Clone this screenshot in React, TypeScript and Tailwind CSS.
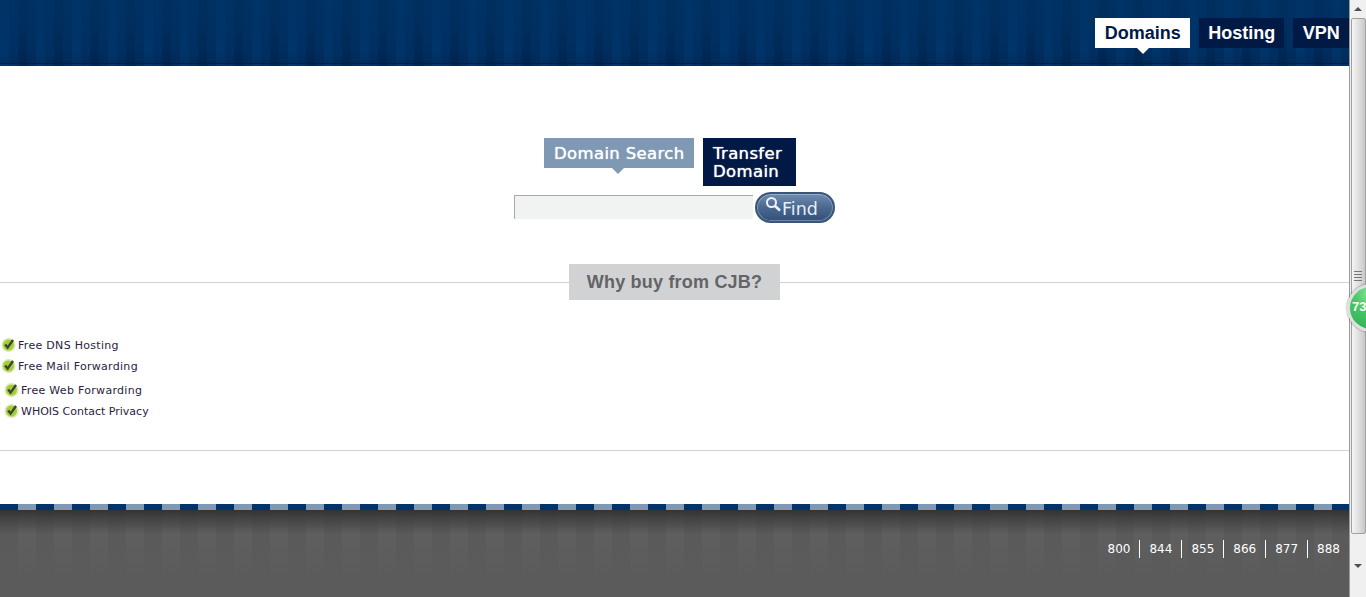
const dv = "font-['DejaVu_Sans',sans-serif]";
const lib = "font-['Liberation_Sans',Arial,sans-serif]";

function Check() {
  return (
    <svg width="15" height="15" viewBox="0 0 15 15" className="shrink-0 -mt-[2px]">
      <circle cx="7.5" cy="8" r="7" fill="#dcebb0" />
      <circle cx="7.5" cy="8" r="5.5" fill="#a5cc3c" />
      <path d="M4.2 7.6 L6.6 10.6 L12 3" fill="none" stroke="#3a4630" strokeWidth="2.4" />
    </svg>
  );
}

function Feature({ label, wide, tight, cls }: { label: string; wide?: boolean; tight?: boolean; cls: string }) {
  return (
    <div className={`flex items-center h-[16px] ${wide ? "pl-[3.5px] gap-[2.5px]" : "pl-[1px] gap-[2px]"} ${cls}`}>
      <Check />
      <span className={`${dv} text-[11px] leading-[16px] text-[#2b2340] whitespace-nowrap mt-[1px] ${tight ? "" : "tracking-[0.3px]"}`}>{label}</span>
    </div>
  );
}

function NavItem({ label, active }: { label: string; active?: boolean }) {
  return (
    <div className="relative">
      <div className={`${lib} h-[30px] px-[9.25px] flex items-center font-bold text-[18px] ${active ? "bg-white text-[#001a45]" : "bg-[#001a45] text-white"}`}>
        {label}
      </div>
      {active && (
        <div className="absolute left-1/2 -ml-[6px] top-[30px] w-0 h-0 border-l-[6px] border-r-[6px] border-t-[6px] border-l-transparent border-r-transparent border-t-white" />
      )}
    </div>
  );
}

export default function App() {
  const numbers = ["800", "844", "855", "866", "877", "888"];
  return (
    <div className="flex h-[597px] w-full overflow-hidden bg-white relative">
      <div className="flex-1 min-w-0 flex flex-col">
        <header className="h-[66px] shrink-0 flex flex-col bg-[repeating-linear-gradient(90deg,#00366c_0,#00366c_9px,#003064_9px,#003064_18px,#002854_18px,#002854_27px,#002e5f_27px,#002e5f_36px)]">
          <div className="flex-1 min-h-0 flex justify-end items-start pt-[18px] gap-[9px] bg-[linear-gradient(180deg,rgba(0,50,100,0.7)_0,rgba(0,50,100,0.5)_45%,rgba(0,40,85,0.1)_85%,rgba(0,30,70,0.3)_100%)]">
            <NavItem label="Domains" active />
            <NavItem label="Hosting" />
            <NavItem label="VPN" />
          </div>
          <div className="h-px shrink-0 bg-[#00204a]" />
          <div className="h-[2px] shrink-0" />
        </header>

        <main className="flex-1 flex flex-col">
          <div className="flex justify-center items-start gap-[9px] pt-[72px] mr-[9px]">
            <div className={`relative ${dv} bg-[#7f99b5] text-white text-[16.5px] tracking-[0.35px] [text-shadow:0_0_1px_#ffffff] whitespace-nowrap h-[30px] w-[150px] pl-[10px] pt-[1px] leading-[30px]`}>
              Domain Search
              <div className="absolute left-[68px] top-[30px] w-0 h-0 border-l-[6px] border-r-[6px] border-t-[6px] border-l-transparent border-r-transparent border-t-[#7f99b5]" />
            </div>
            <div className={`${dv} bg-[#001a45] text-white text-[16.5px] tracking-[0.35px] [text-shadow:0_0_1px_#ffffff] leading-[18px] w-[93px] h-[48px] pl-[10px] pt-[7px]`}>
              Transfer
              <br />
              Domain
            </div>
          </div>

          <div className="flex justify-center items-start gap-[2px] mt-[6px]">
            <div className="w-[239px] h-[24px] mt-[3px] bg-[#f1f3f3] border-t border-l border-[#a8a8a8]" />
            <div className="h-[31px] w-[80px] rounded-full border-2 border-[#3a5678] bg-[linear-gradient(180deg,#6f8cb0_0,#4a688f_50%,#32507a_100%)] flex items-center pl-[8px] shadow-[inset_0_0_0_1px_rgba(255,255,255,0.3)]">
              <svg width="17" height="17" viewBox="0 0 17 17" className="-mt-[6px] shrink-0">
                <circle cx="6.5" cy="6.5" r="4.5" fill="none" stroke="#eef3fa" strokeWidth="2" />
                <path d="M10 10 L15 14.5" stroke="#eef3fa" strokeWidth="2.6" />
              </svg>
              <span className={`${dv} text-[17.5px] leading-[18px] text-[#e8eef6] mt-[2px]`}>Find</span>
            </div>
          </div>

          <div className="flex items-center mt-[41px]">
            <div className="flex-1 h-px bg-[#d2d2d4]" />
            <div className={`${lib} w-[211px] h-[36px] bg-[#d1d2d4] text-[#636466] font-bold text-[18px] tracking-[0.2px] flex items-center justify-center`}>
              Why buy from CJB?
            </div>
            <div className="flex-1 h-px bg-[#d2d2d4]" />
          </div>

          <div className="pt-[37px]">
            <Feature label="Free DNS Hosting" cls="" />
            <Feature label="Free Mail Forwarding" cls="mt-[5px]" />
            <Feature label="Free Web Forwarding" wide cls="mt-[8px]" />
            <Feature label="WHOIS Contact Privacy" wide tight cls="mt-[5px]" />
          </div>

          <div className="h-px bg-[#d2d2d4] mt-[31px]" />
        </main>

        <footer className="shrink-0">
          <div className="h-[6px] bg-[repeating-linear-gradient(90deg,#00356b_0,#00356b_18px,#7f99b5_18px,#7f99b5_36px)]" />
          <div className="h-[87px] bg-[repeating-linear-gradient(90deg,#5a5a5a_0,#5a5a5a_18px,#606060_18px,#606060_36px)]">
            <div className="h-full bg-[linear-gradient(180deg,#333333_0,rgba(60,60,60,0.8)_8px,rgba(90,90,90,0.2)_24px,#5b5b5b_70px)] flex justify-end items-start pt-[30px]">
              {numbers.map((n, i) => (
                <span
                  key={n}
                  className={`${dv} text-[12px] leading-[18px] text-white px-[9px] ${i > 0 ? "border-l border-white" : ""}`}
                >
                  {n}
                </span>
              ))}
            </div>
          </div>
        </footer>
      </div>

      <aside className="w-[17px] shrink-0 h-full bg-[#f0f0f0] border-l border-[#9a9a9a] flex flex-col items-center">
        <div className="h-[18px] w-full flex items-center justify-center">
          <div className="w-0 h-0 border-l-[4px] border-r-[4px] border-b-[4px] border-l-transparent border-r-transparent border-b-[#505050]" />
        </div>
        <div className="w-[15px] h-[516px] rounded-[2px] border border-[#a0a0a0] bg-[linear-gradient(90deg,#f4f4f4_0,#e0e0e0_50%,#c8c8c8_100%)] flex flex-col items-center justify-center gap-[2px]">
          <div className="w-[8px] h-px bg-[#777]" />
          <div className="w-[8px] h-px bg-[#777]" />
          <div className="w-[8px] h-px bg-[#777]" />
          <div className="w-[8px] h-px bg-[#777]" />
        </div>
        <div className="flex-1 w-full flex items-center justify-center">
          <div className="w-0 h-0 border-l-[4px] border-r-[4px] border-t-[4px] border-l-transparent border-r-transparent border-t-[#505050]" />
        </div>
      </aside>

      <div className="absolute left-[1347px] top-[284px] w-[48px] h-[48px] rounded-full border-[3px] border-[#dde0dd] bg-[radial-gradient(circle_at_50%_15%,#8ae898_0,#48c868_40%,#2fae52_100%)] shadow-[0_0_2px_rgba(0,0,0,0.6)]">
        <span className={`${lib} absolute left-[2px] top-[12px] text-white font-bold text-[13px] leading-[16px]`}>73</span>
      </div>
    </div>
  );
}
